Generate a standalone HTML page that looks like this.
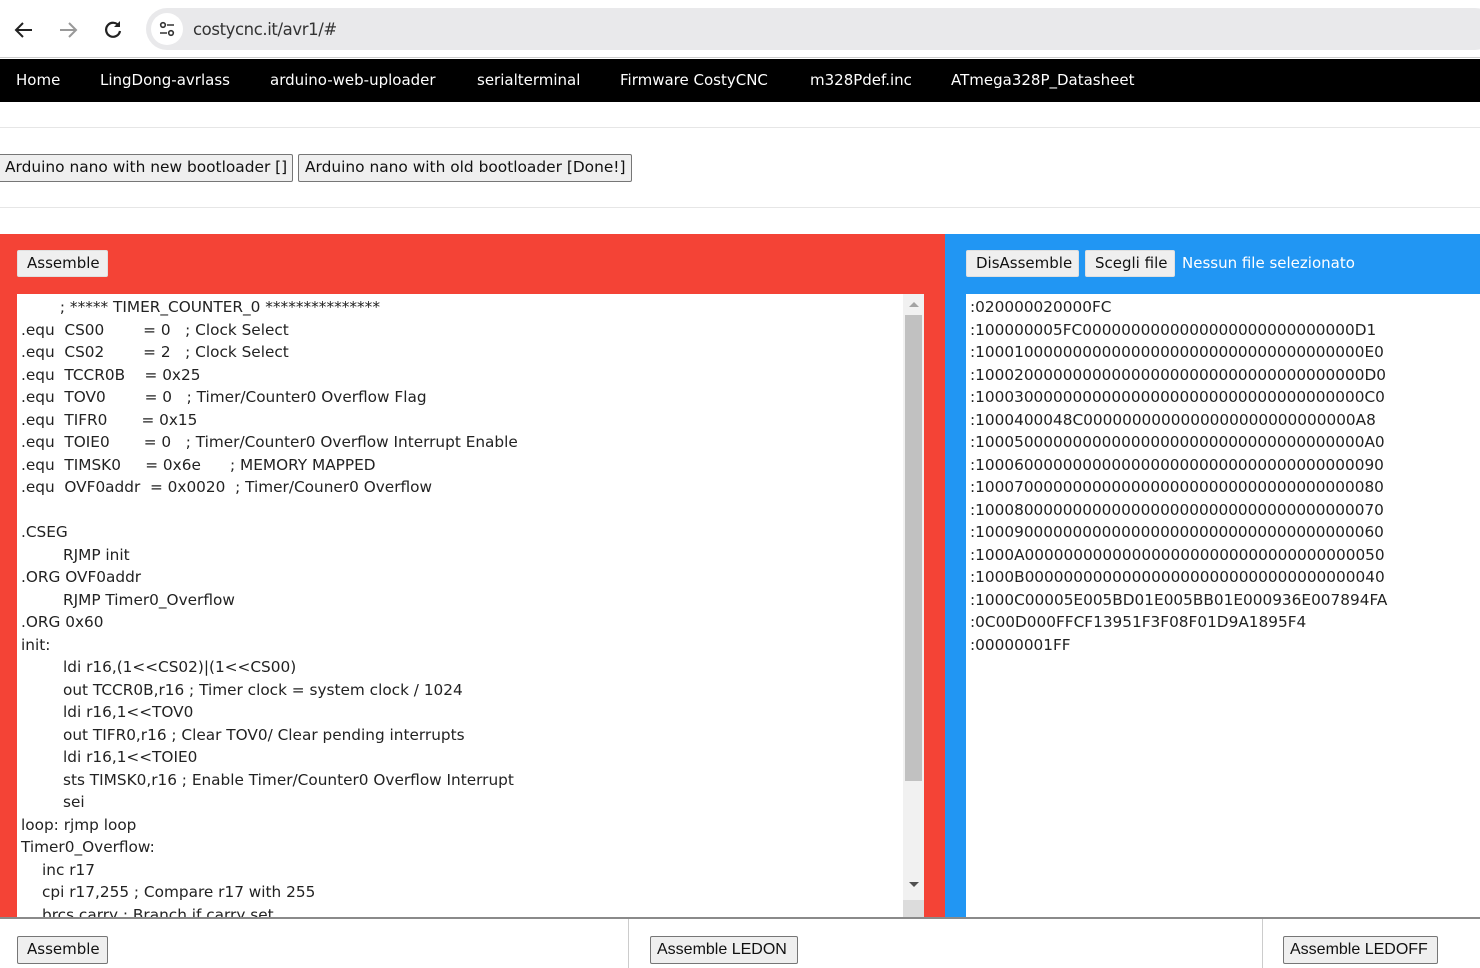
<!DOCTYPE html>
<html><head><meta charset="utf-8"><style>
*{margin:0;padding:0;box-sizing:border-box}
body{width:1480px;height:968px;overflow:hidden;background:#fff;font-family:"DejaVu Sans","Liberation Sans",sans-serif;position:relative}
.a{position:absolute}
.btn{position:absolute;background:#efefef;border:1px solid #767676;border-radius:2px;font-size:15px;color:#111;line-height:25px;padding:0 6px;white-space:nowrap;font-family:"DejaVu Sans",sans-serif;letter-spacing:0}
.nav span{position:absolute;top:71px;color:#fff;font-size:15px;letter-spacing:0}
.code div{height:22.5px;line-height:22.5px;font-size:15.3px;color:#222;white-space:pre;letter-spacing:0}
</style></head><body>
<div class="a" style="left:0;top:0;width:1480px;height:58px;background:#fff;border-bottom:1px solid #ccc"></div>
<svg class="a" style="top:18px;left:12px" width="24" height="24" viewBox="0 0 24 24"><path d="M20 12H5M11 5l-7 7 7 7" stroke="#222" stroke-width="2" fill="none"/></svg>
<svg class="a" style="top:18px;left:56px" width="24" height="24" viewBox="0 0 24 24"><path d="M4 12h15M13 5l7 7-7 7" stroke="#999" stroke-width="2" fill="none"/></svg>
<svg class="a" style="top:18px;left:101px" width="24" height="24" viewBox="0 0 24 24"><path d="M18 8A7 7 0 1 0 19 13" stroke="#222" stroke-width="2.2" fill="none"/><path d="M19 3v6h-6z" fill="#222"/></svg>
<div class="a" style="left:146px;top:8px;width:1350px;height:42px;border-radius:21px;background:#e9e9eb"></div>
<div class="a" style="left:151px;top:13px;width:32px;height:32px;border-radius:16px;background:#fff"></div>
<svg class="a" style="left:158px;top:20px" width="18" height="18" viewBox="0 0 18 18"><circle cx="5" cy="5" r="2.3" stroke="#333" stroke-width="1.6" fill="none"/><path d="M9 5h7M2 13h7" stroke="#333" stroke-width="1.6"/><circle cx="13" cy="13" r="2.3" stroke="#333" stroke-width="1.6" fill="none"/></svg>
<div class="a" style="left:193px;top:20px;font-size:16.5px;color:#333;font-family:'DejaVu Sans',sans-serif;letter-spacing:-0.4px">costycnc.it/avr1/#</div>
<div class="a" style="left:0;top:59px;width:1480px;height:43px;background:#000"></div>
<div class="nav"><span style="left:16px">Home</span><span style="left:100px">LingDong-avrlass</span><span style="left:270px">arduino-web-uploader</span><span style="left:477px">serialterminal</span><span style="left:620px">Firmware CostyCNC</span><span style="left:810px">m328Pdef.inc</span><span style="left:951px">ATmega328P_Datasheet</span></div>
<div class="a" style="left:0;top:127px;width:1480px;height:1px;background:#e6e6e6"></div>
<div class="btn" style="left:-2px;top:154px;height:28px;width:295px;font-size:15.4px">Arduino nano with new bootloader []</div>
<div class="btn" style="left:298px;top:154px;height:28px;width:334px;font-size:15.4px">Arduino nano with old bootloader [Done!]</div>
<div class="a" style="left:0;top:207px;width:1480px;height:1px;background:#e6e6e6"></div>
<div class="a" style="left:0;top:234px;width:945px;height:684px;background:#f44336"></div>
<div class="a" style="left:945px;top:234px;width:535px;height:684px;background:#2196f3"></div>
<div class="btn" style="left:17px;top:250px;height:27px;border-color:#e0e0e0;width:91px;padding:0 9px">Assemble</div>
<div class="btn" style="left:966px;top:250px;height:27px;border-color:#e0e0e0;width:113px;padding:0 9px">DisAssemble</div>
<div class="btn" style="left:1085px;top:250px;height:27px;border-color:#e0e0e0;width:90px;padding:0 9px">Scegli file</div>
<div class="a" style="left:1182px;top:254px;font-size:15px;color:#fff">Nessun file selezionato</div>
<div class="a" style="left:17px;top:294px;width:907px;height:624px;background:#fff;overflow:hidden">
<div class="code a" style="left:4px;top:2px">
<div>        ; ***** TIMER_COUNTER_0 ***************</div>
<div>.equ  CS00        = 0   ; Clock Select</div>
<div>.equ  CS02        = 2   ; Clock Select</div>
<div>.equ  TCCR0B    = 0x25</div>
<div>.equ  TOV0        = 0   ; Timer/Counter0 Overflow Flag</div>
<div>.equ  TIFR0       = 0x15</div>
<div>.equ  TOIE0       = 0   ; Timer/Counter0 Overflow Interrupt Enable</div>
<div>.equ  TIMSK0     = 0x6e      ; MEMORY MAPPED</div>
<div>.equ  OVF0addr  = 0x0020  ; Timer/Couner0 Overflow</div>
<div> </div>
<div>.CSEG</div>
<div style="padding-left:42px">RJMP init</div>
<div>.ORG OVF0addr</div>
<div style="padding-left:42px">RJMP Timer0_Overflow</div>
<div>.ORG 0x60</div>
<div>init:</div>
<div style="padding-left:42px">ldi r16,(1&lt;&lt;CS02)|(1&lt;&lt;CS00)</div>
<div style="padding-left:42px">out TCCR0B,r16 ; Timer clock = system clock / 1024</div>
<div style="padding-left:42px">ldi r16,1&lt;&lt;TOV0</div>
<div style="padding-left:42px">out TIFR0,r16 ; Clear TOV0/ Clear pending interrupts</div>
<div style="padding-left:42px">ldi r16,1&lt;&lt;TOIE0</div>
<div style="padding-left:42px">sts TIMSK0,r16 ; Enable Timer/Counter0 Overflow Interrupt</div>
<div style="padding-left:42px">sei</div>
<div>loop: rjmp loop</div>
<div>Timer0_Overflow:</div>
<div style="padding-left:21px">inc r17</div>
<div style="padding-left:21px">cpi r17,255 ; Compare r17 with 255</div>
<div style="padding-left:21px">brcs carry ; Branch if carry set</div>
</div>
<div class="a" style="left:886px;top:0;width:21px;height:624px;background:#f1f1f1"></div>
<div class="a" style="left:888px;top:21px;width:17px;height:466px;background:#c1c1c1"></div>
<div class="a" style="left:892px;top:8px;width:0;height:0;border:5px solid transparent;border-bottom:5px solid #a3a3a3;border-top:0"></div>
<div class="a" style="left:892px;top:588px;width:0;height:0;border:5px solid transparent;border-top:5px solid #505050;border-bottom:0"></div>
<div class="a" style="left:886px;top:606px;width:21px;height:18px;background:#dcdcdc"></div>
</div>
<div class="a" style="left:966px;top:294px;width:514px;height:624px;background:#fff;overflow:hidden">
<div class="code a" style="left:4px;top:2px">
<div>:020000020000FC</div>
<div>:100000005FC0000000000000000000000000000D1</div>
<div>:1000100000000000000000000000000000000000E0</div>
<div>:1000200000000000000000000000000000000000D0</div>
<div>:1000300000000000000000000000000000000000C0</div>
<div>:1000400048C0000000000000000000000000000A8</div>
<div>:1000500000000000000000000000000000000000A0</div>
<div>:100060000000000000000000000000000000000090</div>
<div>:100070000000000000000000000000000000000080</div>
<div>:100080000000000000000000000000000000000070</div>
<div>:100090000000000000000000000000000000000060</div>
<div>:1000A0000000000000000000000000000000000050</div>
<div>:1000B0000000000000000000000000000000000040</div>
<div>:1000C00005E005BD01E005BB01E000936E007894FA</div>
<div>:0C00D000FFCF13951F3F08F01D9A1895F4</div>
<div>:00000001FF</div>
</div></div>
<div class="a" style="left:0;top:917px;width:1480px;height:2px;background:#8a8a8a"></div>
<div class="a" style="left:628px;top:919px;width:1px;height:49px;background:#ccc"></div>
<div class="a" style="left:1262px;top:919px;width:1px;height:49px;background:#ccc"></div>
<div class="btn" style="left:17px;top:936px;height:28px;width:91px;padding:0 9px">Assemble</div>
<div class="btn" style="left:650px;top:936px;height:28px;width:148px;font-family:'Liberation Sans',sans-serif;font-size:16px">Assemble LEDON</div>
<div class="btn" style="left:1283px;top:936px;height:28px;width:155px;font-family:'Liberation Sans',sans-serif;font-size:16px">Assemble LEDOFF</div>
</body></html>
